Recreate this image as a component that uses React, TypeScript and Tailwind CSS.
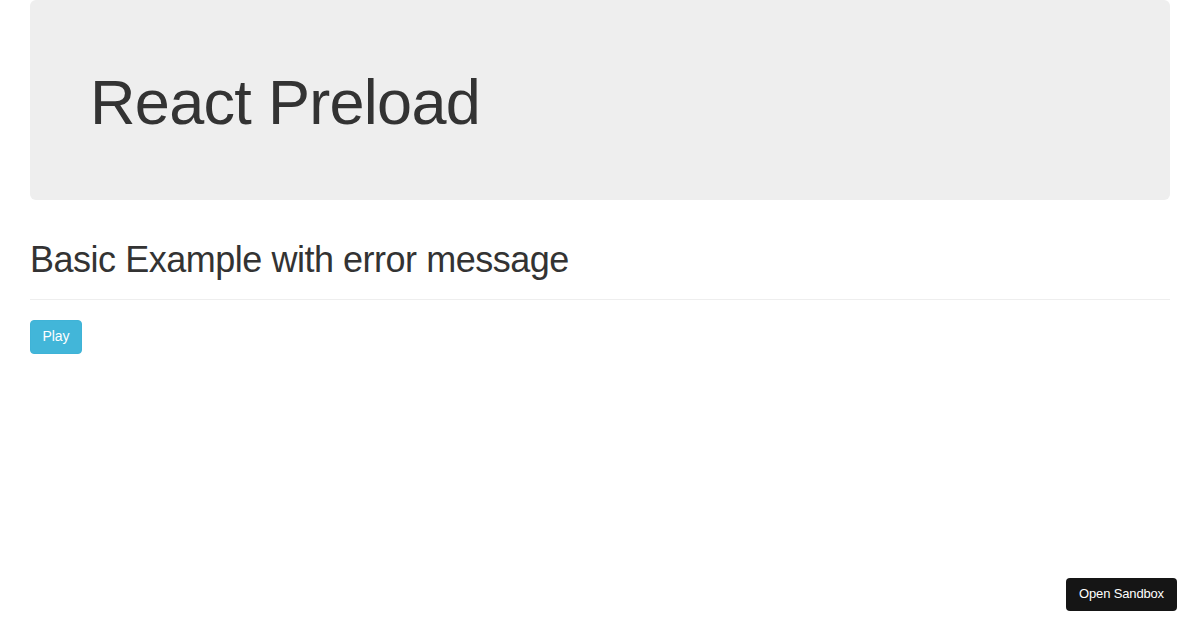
import React from "react";

export default function App() {
  return (
    <div className="min-h-[630px] bg-white text-[#333] [font-family:'Liberation_Sans',Arial,sans-serif] text-[14px] leading-[1.42857]">
      <div className="mx-auto w-[1170px] px-[15px]">
        <div className="h-[200px] rounded-[6px] bg-[#eeeeee] px-[60px] pt-[68px]">
          <h1 className="text-[63px] leading-[1.1] font-normal tracking-[-0.7px]">React Preload</h1>
        </div>
        <div className="mt-[40px] mb-[20px] border-b border-[#eeeeee] pb-[9px]">
          <h1 className="mb-[10px] text-[36px] leading-[1.1] font-normal tracking-[-0.48px]">Basic Example with error message</h1>
        </div>
        <button className="h-[34px] w-[52px] rounded-[4px] border border-[#3fb3d7] bg-[#42b6d9] text-center text-[14px] text-white">
          Play
        </button>
      </div>
      <button className="fixed right-[23px] bottom-[19px] h-[33px] w-[111px] rounded-[4px] bg-[#151515] text-center text-[13px] tracking-[-0.15px] text-white [font-family:'Liberation_Sans',Arial,sans-serif]">
        Open Sandbox
      </button>
    </div>
  );
}
